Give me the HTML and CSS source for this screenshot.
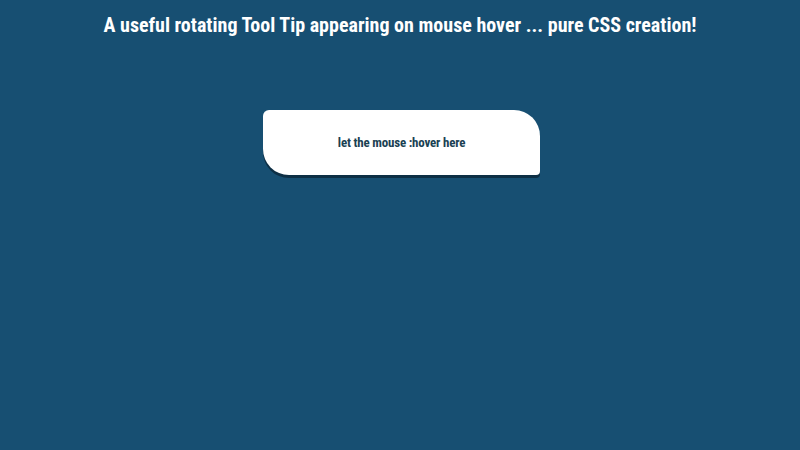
FILE: index.html
```html
<!DOCTYPE html>
<html lang="en">
<head>
<meta charset="utf-8">
<title>Rotating Tool Tip</title>
<link rel="stylesheet" href="styles.css">
</head>
<body>
  <h1 class="title">A useful rotating Tool Tip appearing on mouse hover ... pure CSS creation!</h1>
  <div class="stage">
    <div class="hover-box">let the mouse :hover here</div>
  </div>
</body>
</html>
```
FILE: styles.css
```css
html, body {
  margin: 0;
  padding: 0;
}

body {
  background: #174f72;
  font-family: "Roboto Condensed", Roboto, "Liberation Sans", sans-serif;
  width: 800px;
  height: 450px;
  overflow: hidden;
}

.title {
  margin: 0;
  padding-top: 13px;
  text-align: center;
  color: #ffffff;
  font-size: 20px;
  font-weight: 700;
  line-height: 24px;
}

.stage {
  display: flex;
  justify-content: center;
  padding-top: 73px;
  padding-left: 3px;
}

.hover-box {
  width: 277px;
  height: 65px;
  display: flex;
  align-items: center;
  justify-content: center;
  background: #ffffff;
  color: #1a4152;
  font-size: 13px;
  font-weight: 700;
  letter-spacing: -0.2px;
  border-radius: 6px 26px 4px 26px;
  box-shadow: 0 3px 0 #0d2f45;
}
```
